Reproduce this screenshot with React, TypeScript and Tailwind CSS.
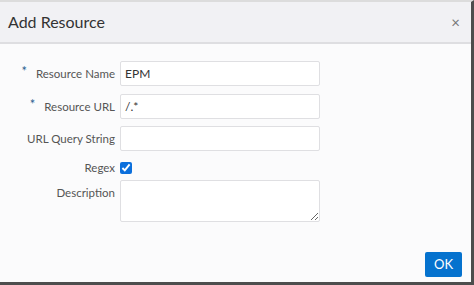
import { useState } from 'react';

function Label({ text, required }: { text: string; required?: boolean }) {
  return (
    <div className="flex h-[25px] w-[120px] shrink-0 items-center justify-end pr-[5px] text-[11.5px] text-[#555]">
      {required && <span className="mr-[9px] -translate-y-[2px] text-[13px] leading-none text-[#2a5f8f]">*</span>}
      <span>{text}</span>
    </div>
  );
}

const inputCls =
  'h-[25px] w-[200px] rounded-[2px] border border-[#dfdfe2] bg-white px-[4px] text-[12px] text-[#333] outline-none';

export default function App() {
  const [name, setName] = useState('EPM');
  const [url, setUrl] = useState('/.*');
  const [query, setQuery] = useState('');
  const [regex, setRegex] = useState(true);
  const [desc, setDesc] = useState('');

  return (
    <div
      className="flex h-[285px] w-[474px] flex-col border-t-2 border-r-[3px] border-b-[3px] border-t-[#dcdcdc] border-r-[#4d4d4d] border-b-[#4d4d4d] bg-[#fbfbfc]"
      style={{ fontFamily: 'Lato, "Noto Sans", sans-serif' }}
    >
      <div className="flex h-[42px] shrink-0 items-center justify-between border-b-2 border-[#dedee1] bg-[#f1f1f4] pr-[11px] pl-[8px]">
        <h1 className="text-[16px] text-[#333]">Add Resource</h1>
        <button className="text-[15px] leading-none text-[#777]">×</button>
      </div>

      <form className="flex flex-1 flex-col pt-[17px]" onSubmit={(e) => e.preventDefault()}>
        <div className="flex">
          <Label text="Resource Name" required />
          <input className={inputCls} value={name} onChange={(e) => setName(e.target.value)} />
        </div>
        <div className="mt-[8px] flex">
          <Label text="Resource URL" required />
          <input className={inputCls} value={url} onChange={(e) => setUrl(e.target.value)} />
        </div>
        <div className="mt-[7px] flex">
          <Label text="URL Query String" />
          <input className={inputCls} value={query} onChange={(e) => setQuery(e.target.value)} />
        </div>
        <div className="mt-[6px] flex h-[21px] items-center">
          <Label text="Regex" />
          <input
            type="checkbox"
            checked={regex}
            onChange={(e) => setRegex(e.target.checked)}
            className="m-0 h-[12px] w-[12px] accent-[#0b6fdc]"
          />
        </div>
        <div className="mt-[2px] flex">
          <Label text="Description" />
          <textarea
            className="h-[42px] w-[200px] resize rounded-[2px] border border-[#dfdfe2] bg-white px-[4px] text-[12px] outline-none"
            value={desc}
            onChange={(e) => setDesc(e.target.value)}
          />
        </div>
        <div className="mt-auto flex justify-end pr-[9px] pb-[5px]">
          <button
            type="submit"
            className="h-[25px] w-[37px] rounded-[2px] bg-[#0572ce] text-[13px] text-white"
          >
            OK
          </button>
        </div>
      </form>
    </div>
  );
}
